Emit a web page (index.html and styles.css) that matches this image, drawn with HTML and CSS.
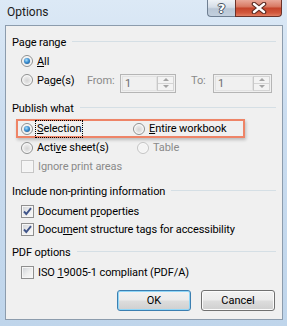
FILE: index.html
```html
<!DOCTYPE html>
<html lang="en">
<head>
    <meta charset="UTF-8">
    <meta name="viewport" content="width=device-width, initial-scale=1.0">
    <title>Options</title>
    <link rel="stylesheet" href="styles.css">
</head>
<body>
<div class="window">
    <div class="titlebar">
        <span class="title">Options</span>
        <div class="caption-buttons">
            <span class="cap-btn help">?</span>
            <span class="cap-btn close">
                <svg width="16" height="12" viewBox="0 0 16 12">
                    <path d="M3 2 L13 10 M13 2 L3 10" stroke="#5a2a22" stroke-width="4.6" stroke-linecap="round"/>
                    <path d="M3 2 L13 10 M13 2 L3 10" stroke="#fff" stroke-width="2.4" stroke-linecap="round"/>
                </svg>
            </span>
        </div>
    </div>

    <div class="client">
        <div class="group-head"><span>Page range</span><i class="rule"></i></div>
        <div class="row h18">
            <span class="radio checked"></span><span class="lbl"><u>A</u>ll</span>
        </div>
        <div class="row h20">
            <span class="radio"></span><span class="lbl pages">Pa<u>g</u>e(s)</span>
            <span class="lbl dim from">From:</span>
            <div class="spin w56">
                <span class="spin-text">1</span>
                <span class="spin-btns"><i class="up"></i><i class="down"></i></span>
            </div>
            <span class="lbl dim to">To:</span>
            <div class="spin w59">
                <span class="spin-text">1</span>
                <span class="spin-btns"><i class="up"></i><i class="down"></i></span>
            </div>
        </div>

        <div class="group-head gap10"><span>Publish what</span><i class="rule"></i></div>
        <div class="rows">
            <div class="row h19 marked">
                <span class="cell">
                    <span class="radio checked"></span><span class="lbl focus"><u>S</u>election</span>
                </span>
                <span class="cell">
                    <span class="radio"></span><span class="lbl"><u>E</u>ntire workbook</span>
                </span>
            </div>
            <div class="row h19">
                <span class="cell">
                    <span class="radio"></span><span class="lbl">Acti<u>v</u>e sheet(s)</span>
                </span>
                <span class="cell">
                    <span class="radio off"></span><span class="lbl dim">Table</span>
                </span>
            </div>
            <div class="row h19">
                <span class="check off"></span><span class="lbl dim">Ignore print areas</span>
            </div>
        </div>

        <div class="group-head gap7"><span>Include non-printing information</span><i class="rule"></i></div>
        <div class="rows">
            <div class="row h18">
                <span class="check">
                    <svg width="11" height="11" viewBox="0 0 11 11"><path d="M2 5.5 L4.3 8 L9 2.2" fill="none" stroke="#3f5489" stroke-width="1.9"/></svg>
                </span>
                <span class="lbl">Document p<u>r</u>operties</span>
            </div>
            <div class="row h18">
                <span class="check">
                    <svg width="11" height="11" viewBox="0 0 11 11"><path d="M2 5.5 L4.3 8 L9 2.2" fill="none" stroke="#3f5489" stroke-width="1.9"/></svg>
                </span>
                <span class="lbl">Docu<u>m</u>ent structure tags for accessibility</span>
            </div>
        </div>

        <div class="group-head gap6"><span>PDF options</span><i class="rule"></i></div>
        <div class="rows">
            <div class="row h19">
                <span class="check"></span><span class="lbl">ISO <u>1</u>9005-1 compliant (PDF/A)</span>
            </div>
        </div>

        <div class="buttons">
            <button class="button default">OK</button>
            <button class="button">Cancel</button>
        </div>
    </div>
</div>
</body>
</html>
```

FILE: styles.css
```css
body {
    margin: 0;
    font-family: Roboto, "Liberation Sans", Arial, sans-serif;
    font-size: 11px;
    letter-spacing: -0.1px;
    color: #000;
}
.window {
    width: 287px;
    height: 326px;
    display: flex;
    flex-direction: column;
    background: linear-gradient(180deg, #dce9f6 0, #cbddf0 35%, #bfd5eb 100%);
}
.titlebar {
    height: 25px;
    display: flex;
    justify-content: space-between;
    align-items: flex-start;
    padding-left: 7px;
}
.title {
    font-size: 12px;
    line-height: 16px;
    padding-top: 4px;
    color: #1b1b1b;
    letter-spacing: 0;
}
.caption-buttons {
    display: flex;
    margin-right: 5px;
}
.cap-btn {
    height: 17px;
    box-sizing: border-box;
    display: flex;
    align-items: center;
    justify-content: center;
    border: 1px solid #6f7f92;
    border-top: none;
}
.cap-btn.help {
    width: 28px;
    border-right: none;
    border-radius: 0 0 0 4px;
    background: linear-gradient(180deg, #eef2f6 0, #d5dde7 45%, #b9c6d5 55%, #c3d0de 100%);
    color: #fff;
    font-weight: bold;
    font-size: 13px;
    font-family: "DejaVu Sans", sans-serif;
    text-shadow: 0 0 1px #3d4856, 1px 0 0 #4a5566, -1px 0 0 #4a5566, 0 1px 0 #4a5566, 0 -1px 0 #4a5566;
}
.cap-btn.close {
    width: 47px;
    border-color: #6b3229;
    border-radius: 0 0 4px 0;
    background: linear-gradient(180deg, #e9a899 0, #d97b65 40%, #c5452b 52%, #d2573c 80%, #e07e62 100%);
}
.client {
    flex: 1;
    margin: 0 4px 6px 5px;
    border: 1px solid #8c9cad;
    background: #f0f0f0;
    padding-top: 8px;
    display: flex;
    flex-direction: column;
}
.group-head {
    height: 16px;
    display: flex;
    align-items: center;
    padding: 0 6px;
    white-space: nowrap;
}
.group-head .rule {
    flex: 1;
    height: 1px;
    margin: -1px 0 0 6px;
    background: #d5dfe5;
}
.gap10 { margin-top: 10px; }
.gap7 { margin-top: 7px; }
.gap6 { margin-top: 6px; }
.rows { margin-top: 3px; }
.client > .row.h18:nth-child(2) { margin-top: 2px; }
.row {
    display: flex;
    align-items: center;
    padding-left: 15px;
    white-space: nowrap;
}
.h18 { height: 18px; }
.h19 { height: 19px; }
.h20 { height: 20px; }
.row.marked {
    margin-left: 10px;
    width: 229px;
    padding-left: 5px;
    box-sizing: border-box;
    box-shadow: inset 0 0 0 2px #ee8467, 1px 2px 3px rgba(0, 0, 0, 0.22);
}
.cell {
    width: 116px;
    display: flex;
    align-items: center;
}
.lbl { padding-left: 4px; }
.lbl u { text-underline-offset: 1px; }
.lbl.dim { color: #8a8a8a; }
.lbl.focus {
    padding: 1px 1px 2px;
    margin-left: 3px;
    outline: 1px dotted #000;
    outline-offset: 0;
}
.pages { width: 46px; }
.from { width: 33px; }
.to { width: 22px; margin-left: 11px; }
.radio {
    width: 12px;
    height: 12px;
    box-sizing: border-box;
    border-radius: 50%;
    border: 1px solid #8f9090;
    background: radial-gradient(circle at 50% 55%, #d4d4d4 0, #e8e8e8 45%, #f8f8f8 75%);
    box-shadow: inset 0 0 0 1px #fafafa;
    display: flex;
    align-items: center;
    justify-content: center;
}
.radio.checked::after {
    content: "";
    width: 6px;
    height: 6px;
    border-radius: 50%;
    background: radial-gradient(circle at 40% 35%, #a9e0fb 0, #3c8fd2 45%, #12477c 100%);
}
.radio.off {
    border-color: #c4c4c4;
    background: #f4f4f4;
}
.check {
    width: 13px;
    height: 13px;
    box-sizing: border-box;
    border: 1px solid #8f8f8f;
    background: linear-gradient(135deg, #cdd1d6 0, #eeeeee 55%, #f9f9f9 100%);
    box-shadow: inset 0 0 0 1px #f6f6f6;
    display: flex;
    align-items: center;
    justify-content: center;
}
.check.off {
    border-color: #c6c6c6;
    background: #f4f4f4;
}
.spin {
    height: 19px;
    margin-top: 6px;
    box-sizing: border-box;
    border: 1px solid #b5b5b5;
    padding: 1px;
    display: flex;
    background: #f0f0f0;
}
.w56 { width: 56px; }
.w59 { width: 59px; }
.spin-text {
    flex: 1;
    border: 1px solid #e2e2e2;
    padding-left: 2px;
    line-height: 13px;
    color: #6d6d6d;
}
.spin-btns {
    width: 15px;
    display: flex;
    flex-direction: column;
    border: 1px solid #d4d4d4;
    border-left-color: #c8c8c8;
}
.spin-btns i {
    flex: 1;
    display: flex;
    align-items: center;
    justify-content: center;
    background: #f3f3f3;
}
.spin-btns i + i { border-top: 1px solid #d4d4d4; }
.spin-btns .up::after {
    content: "";
    border: 3px solid transparent;
    border-top: none;
    border-bottom: 3px solid #a4a4a4;
}
.spin-btns .down::after {
    content: "";
    border: 3px solid transparent;
    border-bottom: none;
    border-top: 3px solid #a4a4a4;
}
.buttons {
    display: flex;
    justify-content: flex-end;
    gap: 10px;
    margin-top: 8px;
    padding-right: 7px;
}
.button {
    width: 74px;
    height: 21px;
    border: 1px solid #707070;
    border-radius: 3px;
    background: linear-gradient(180deg, #f2f2f2 0, #ebebeb 48%, #dddddd 52%, #cfcfcf 100%);
    box-shadow: inset 0 0 0 1px #fbfbfb;
    font: inherit;
    color: #000;
    padding: 0;
}
.button.default {
    border-color: #3c7fb1;
    box-shadow: inset 0 0 0 1px #8fd6f8;
}
```
